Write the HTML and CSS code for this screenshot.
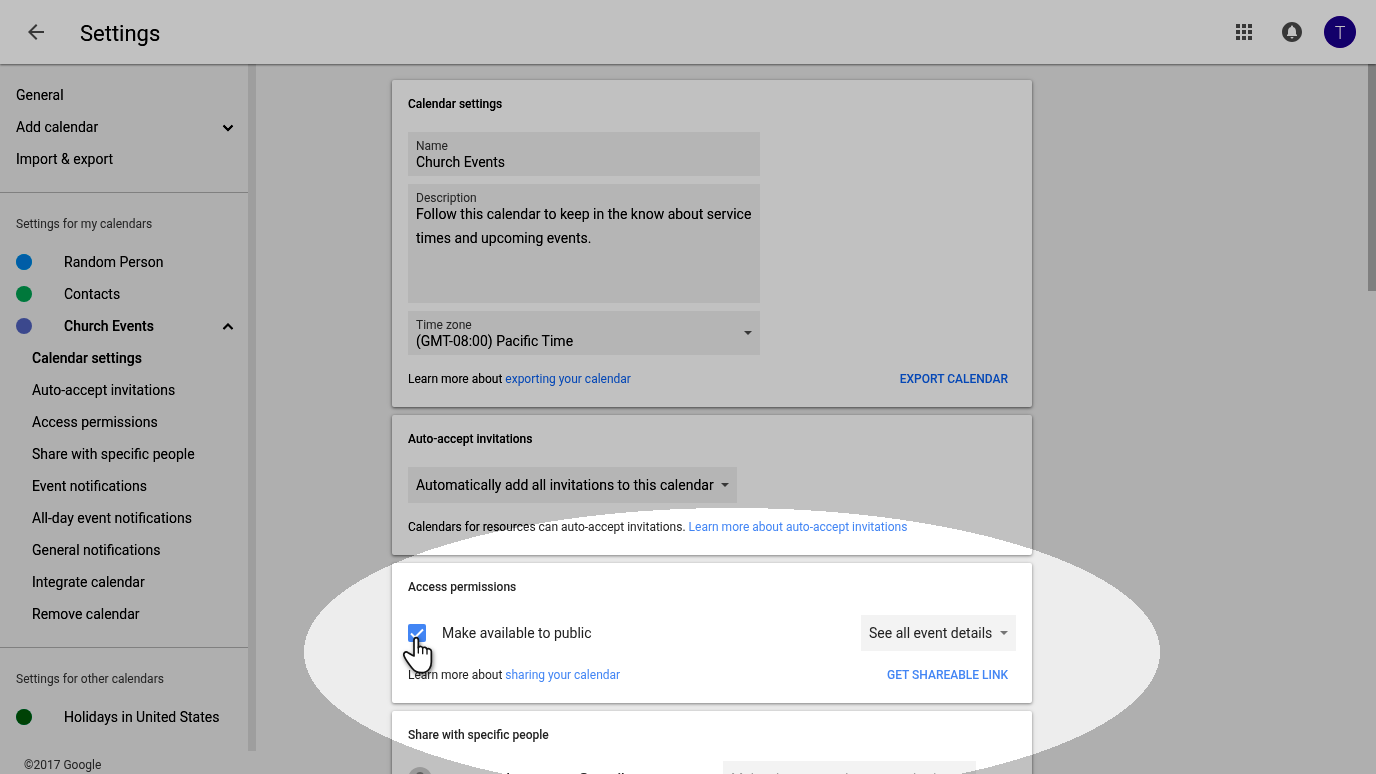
FILE: index.html
```html
<!doctype html>
<html lang="en">
<head>
	<meta charset="utf-8">
	<meta name="viewport" content="width=device-width, initial-scale=1">
	<title>Settings</title>
	<link rel="stylesheet" href="styles.css">
</head>
<body>
	<header class="topbar">
		<button class="icon-btn" type="button" aria-label="Back">
			<svg viewBox="0 0 24 24" width="24" height="24"><path d="M20 11H7.83l5.59-5.59L12 4l-8 8 8 8 1.41-1.41L7.83 13H20v-2z"/></svg>
		</button>
		<h1 class="title">Settings</h1>
		<div class="tools">
			<button class="icon-btn" type="button" aria-label="Apps">
				<svg viewBox="0 0 24 24" width="24" height="24"><path d="M4 8h4V4H4v4zm6 12h4v-4h-4v4zm-6 0h4v-4H4v4zm0-6h4v-4H4v4zm6 0h4v-4h-4v4zm6-10v4h4V4h-4zm-6 4h4V4h-4v4zm6 6h4v-4h-4v4zm0 6h4v-4h-4v4z"/></svg>
			</button>
			<button class="icon-btn" type="button" aria-label="Notifications">
				<svg viewBox="0 0 24 24" width="24" height="24"><path d="M12 2C6.48 2 2 6.48 2 12s4.48 10 10 10 10-4.48 10-10S17.52 2 12 2zm0 16.5c-.83 0-1.5-.67-1.5-1.5h3c0 .83-.67 1.5-1.5 1.5zm5-2.5H7v-1l1-1v-2.61C8 9.27 9.03 7.47 11 7v-.5c0-.57.43-1 1-1s1 .43 1 1V7c1.97.47 3 2.28 3 4.39V14l1 1v1z"/></svg>
			</button>
		</div>
		<button class="avatar" type="button">T</button>
	</header>

	<div class="page">
		<div class="side">
			<nav class="sidebar">
				<a class="item" href="#">General</a>
				<a class="item" href="#">Add calendar
					<svg class="chevron" viewBox="0 0 16 16" width="16" height="16"><path d="M3.5 6.5L8 11l4.5-4.5"/></svg>
				</a>
				<a class="item" href="#">Import &amp; export</a>
				<hr class="line">
				<h2 class="group">Settings for my calendars</h2>
				<a class="item" href="#"><span class="dot blue"></span>Random Person</a>
				<a class="item" href="#"><span class="dot green"></span>Contacts</a>
				<a class="item open" href="#"><span class="dot indigo"></span>Church Events
					<svg class="chevron" viewBox="0 0 16 16" width="16" height="16"><path d="M3.5 11L8 6.500l4.500 4.500"/></svg>
				</a>
				<a class="item sub open" href="#">Calendar settings</a>
				<a class="item sub" href="#">Auto-accept invitations</a>
				<a class="item sub" href="#">Access permissions</a>
				<a class="item sub" href="#">Share with specific people</a>
				<a class="item sub" href="#">Event notifications</a>
				<a class="item sub" href="#">All-day event notifications</a>
				<a class="item sub" href="#">General notifications</a>
				<a class="item sub" href="#">Integrate calendar</a>
				<a class="item sub" href="#">Remove calendar</a>
				<hr class="line">
				<h2 class="group">Settings for other calendars</h2>
				<a class="item" href="#"><span class="dot pine"></span>Holidays in United States</a>
			</nav>
			<footer class="copy">©2017 Google</footer>
		</div>

		<main class="main">
			<section class="card">
				<h2 class="card-title">Calendar settings</h2>
				<div class="fields">
					<div class="field">
						<label class="label" for="name">Name</label>
						<input class="value" id="name" type="text" value="Church Events">
					</div>
					<div class="field">
						<label class="label" for="desc">Description</label>
						<textarea class="value desc" id="desc">Follow this calendar to keep in the know about service times and upcoming events.</textarea>
					</div>
					<div class="field with-arrow">
						<div class="stack">
							<label class="label" for="zone">Time zone</label>
							<select class="value" id="zone"><option>(GMT-08:00) Pacific Time</option></select>
						</div>
						<svg class="arrow" viewBox="0 0 8 4" width="8" height="4"><path d="M0 0h8L4 4z"/></svg>
					</div>
				</div>
				<div class="foot">
					<p class="note">Learn more about <a href="#">exporting your calendar</a></p>
					<button class="text-btn" type="button">Export calendar</button>
				</div>
			</section>

			<section class="card">
				<h2 class="card-title">Auto-accept invitations</h2>
				<div class="row">
					<div class="picker">
						<select class="value" aria-label="Auto-accept invitations"><option>Automatically add all invitations to this calendar</option></select>
						<svg class="arrow" viewBox="0 0 8 4" width="8" height="4"><path d="M0 0h8L4 4z"/></svg>
					</div>
				</div>
				<div class="foot">
					<p class="note">Calendars for resources can auto-accept invitations. <a href="#">Learn more about auto-accept invitations</a></p>
				</div>
			</section>

			<section class="card">
				<h2 class="card-title">Access permissions</h2>
				<div class="row">
					<label class="check"><input class="box" type="checkbox" checked>Make available to public</label>
					<div class="picker">
						<select class="value" aria-label="Public access"><option>See all event details</option></select>
						<svg class="arrow" viewBox="0 0 8 4" width="8" height="4"><path d="M0 0h8L4 4z"/></svg>
					</div>
				</div>
				<div class="foot">
					<p class="note">Learn more about <a href="#">sharing your calendar</a></p>
					<button class="text-btn" type="button">Get shareable link</button>
				</div>
			</section>

			<section class="card people">
				<h2 class="card-title">Share with specific people</h2>
				<div class="row">
					<div class="person">
						<svg viewBox="0 0 24 24" width="24" height="24"><circle cx="12" cy="12" r="12" fill="#d8d8d8"/><circle cx="12" cy="9" r="4" fill="#9e9e9e"/><path d="M4 19c1-4 4-5 8-5s7 1 8 5c-4 4-12 4-16 0z" fill="#9e9e9e"/></svg>
						<span class="mail">random.person@gmail.com</span>
					</div>
					<div class="picker">
						<select class="value" aria-label="Permission" disabled><option>Make changes and manage sharing</option></select>
						<svg class="arrow" viewBox="0 0 8 4" width="8" height="4"><path d="M0 0h8L4 4z"/></svg>
					</div>
				</div>
			</section>
		</main>

		<div class="scroll"><div class="thumb"></div></div>
	</div>

	<!-- dims everything but the access permissions card -->
	<div class="spotlight"></div>
	<svg class="hand" viewBox="0 0 96 120" width="32" height="40">
		<path d="M36 63V16c0-11 13-11 13 0v22c4-6 12-4 13 1 4-4 11-2 12 3 5-3 14 0 14 7v32c0 9-2 14-5 19-5 8-13 13-25 13-13 0-21-5-28-14C21 88 13 78 7 65 2 55 10 47 18 53c6 3 11 8 18 10z" fill="#fff" stroke="#111" stroke-width="5" stroke-linejoin="round"/>
		<path d="M49 36v18M62 38v18M75 41v16" fill="none" stroke="#111" stroke-width="4" stroke-linecap="round"/>
	</svg>
</body>
</html>
```
FILE: styles.css
```css
* { box-sizing: border-box; margin: 0; padding: 0; }

html { height: 100%; }

body {
	display: flex;
	flex-direction: column;
	height: 100%;
	overflow: hidden;
	background: #ededed;
	color: #212121;
	font: 14px/16px Roboto, sans-serif;
}

a { color: #4285f4; text-decoration: none; }
button { border: none; background: none; font-family: inherit; cursor: pointer; }
svg { display: block; flex: none; }

/* top bar */
.topbar {
	position: relative;
	display: flex;
	align-items: center;
	height: 64px;
	flex: none;
	padding: 0 20px 0 24px;
	background: #fff;
	box-shadow: 0 1px 2px rgba(0, 0, 0, 0.4);
	z-index: 1;
}
.icon-btn { fill: #757575; }
.title { margin-left: 32px; padding-top: 4px; font-size: 22px; line-height: 28px; font-weight: 400; }
.tools { display: flex; gap: 24px; margin-left: auto; }
.avatar {
	width: 32px;
	height: 32px;
	margin-left: 20px;
	border-radius: 50%;
	background: #512da8;
	color: #fff;
	font-size: 18px;
	font-weight: 300;
}

.page { display: flex; flex: 1; min-height: 0; }

/* sidebar */
.side { width: 256px; flex: none; }
.sidebar {
	padding: 15px 0 18px;
	border-right: 8px solid #dcdcdc;
}
.item {
	display: flex;
	align-items: center;
	height: 32px;
	padding: 0 12px 0 16px;
	color: #212121;
}
.sub { padding-left: 32px; }
.open { font-weight: 500; }
.chevron { margin-left: auto; fill: none; stroke: #212121; stroke-width: 2; }
.dot { width: 16px; height: 16px; margin-right: 32px; border-radius: 50%; }
.blue { background: #039be5; }
.green { background: #33b679; }
.indigo { background: #7986cb; }
.pine { background: #0b8043; }
.line { height: 1px; margin: 17px 0 15px; border: none; background: #bebebe; }
.group {
	margin-bottom: 6px;
	padding-left: 16px;
	color: #616161;
	font-size: 12px;
	line-height: 32px;
	font-weight: 400;
}
.copy { padding: 6px 24px; color: #616161; font-size: 12px; }

/* cards */
.main {
	display: flex;
	flex-direction: column;
	align-items: center;
	gap: 8px;
	flex: 1;
	overflow: hidden;
	padding: 16px 200px 16px 0;
}
.card {
	width: 100%;
	max-width: 640px;
	flex: none;
	padding: 16px 16px 12px;
	border-radius: 2px;
	background: #fff;
	box-shadow: 0 1px 3px rgba(0, 0, 0, 0.4), 0 1px 6px rgba(0, 0, 0, 0.1);
}
.card-title { margin-bottom: 20px; font-size: 12px; line-height: 16px; font-weight: 500; }
.people .card-title { margin-bottom: 18px; }

.fields { display: flex; flex-direction: column; gap: 8px; max-width: 352px; }
.field {
	display: flex;
	flex-direction: column;
	padding: 6px 8px;
	background: #f3f3f3;
}
.with-arrow { flex-direction: row; align-items: center; }
.stack { display: flex; flex-direction: column; flex: 1; }
.label { color: #616161; font-size: 12px; line-height: 16px; }
.value {
	appearance: none;
	border: none;
	outline: none;
	background: none;
	color: #212121;
	font: 14px/16px Roboto, sans-serif;
}
.value:disabled { color: #9e9e9e; opacity: 1; }
.desc { height: 95px; margin-top: -4px; line-height: 24px; resize: none; overflow: hidden; }
.arrow { fill: #757575; }

.row { display: flex; align-items: center; justify-content: space-between; }
.picker {
	display: flex;
	align-items: center;
	gap: 7px;
	height: 36px;
	padding: 0 8px;
	background: #f3f3f3;
}
.foot {
	display: flex;
	align-items: center;
	justify-content: space-between;
	height: 32px;
	margin-top: 8px;
}
.note { font-size: 12px; }
.text-btn {
	padding: 8px;
	color: #4285f4;
	font-size: 12px;
	line-height: 16px;
	font-weight: 500;
	text-transform: uppercase;
}

.check { display: flex; align-items: center; gap: 16px; }
.box {
	appearance: none;
	width: 18px;
	height: 18px;
	border-radius: 2px;
	background: #4285f4 url("data:image/svg+xml,%3Csvg xmlns='http://www.w3.org/2000/svg' viewBox='0 0 18 18'%3E%3Cpath d='M3 9.5l4 4 8-8' fill='none' stroke='%23fff' stroke-width='2'/%3E%3C/svg%3E");
}

.people .row { padding-right: 40px; }
.person { display: flex; align-items: center; gap: 50px; }
.mail { font-weight: 500; }

/* page scrollbar */
.scroll { width: 8px; flex: none; }
.thumb { height: 32%; background: #bdbdbd; }

/* overlay */
.spotlight {
	position: absolute;
	inset: 0;
	z-index: 2;
	pointer-events: none;
	/* together these take the same amount off every channel */
	backdrop-filter: brightness(0.673) contrast(1.486);
	-webkit-mask-image: radial-gradient(428px 144px at 732px 652px, transparent 100%, #000 100%);
	mask-image: radial-gradient(428px 144px at 732px 652px, transparent 100%, #000 100%);
}
.hand {
	position: absolute;
	left: 402px;
	top: 635px;
	z-index: 3;
	filter: drop-shadow(1px 2px 2px rgba(0, 0, 0, 0.5));
}
```
